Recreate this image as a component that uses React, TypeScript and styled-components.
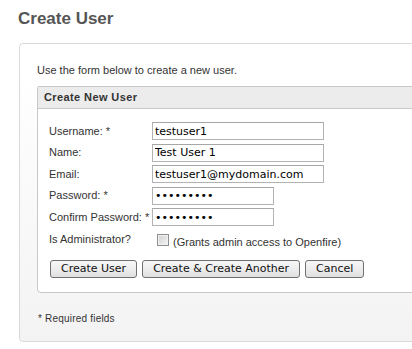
import { Fragment } from 'react';
import styled, { createGlobalStyle } from 'styled-components';

const GlobalStyle = createGlobalStyle`
  html, body {
    margin: 0;
    padding: 0;
    background: #fff;
    overflow: hidden;
  }
  body {
    font-family: "Liberation Sans", Arial, sans-serif;
  }
`;

const Page = styled.div`
  width: 412px;
  height: 349px;
  overflow: hidden;
`;

const Title = styled.h1`
  margin: 9px 0 14px 18px;
  font-size: 17px;
  line-height: 20px;
  font-weight: bold;
  color: #555;
`;

const ContentBox = styled.div`
  margin-left: 19px;
  width: 440px;
  padding: 20px 0 16.5px 17px;
  border: 1px solid #d9d9d9;
  border-radius: 4px;
  background: linear-gradient(to bottom, #fff 0px, #fff 30px, #f3f3f3 100%);
`;

const Intro = styled.p`
  margin: 0 0 9px;
  font-size: 11px;
  line-height: 13px;
  color: #333;
`;

const Panel = styled.div`
  border: 1px solid #c8c8c8;
  border-radius: 2px 2px 4px 4px;
  background: #fff;
`;

const PanelHeader = styled.div`
  padding: 4px 0 4px 6px;
  font-size: 11px;
  line-height: 13px;
  font-weight: bold;
  letter-spacing: 0.4px;
  color: #333;
  background: #ececec;
  border-bottom: 1px solid #c8c8c8;
`;

const PanelBody = styled.div`
  padding: 13px 0 14px 11px;
`;

const FormGrid = styled.div`
  display: grid;
  grid-template-columns: 103px auto;
  row-gap: 3.5px;
  align-items: center;
`;

const Label = styled.label`
  font-size: 11px;
  line-height: 13px;
  color: #333;
  white-space: nowrap;
`;

const TextInput = styled.input<{ $wide?: boolean }>`
  box-sizing: border-box;
  width: ${(p) => (p.$wide ? '172px' : '122px')};
  height: 18px;
  margin: 0;
  padding: 0 2px;
  border: 1px solid #b3b3b3;
  border-top-color: #a6a6a6;
  background: #fff;
  font-family: "DejaVu Sans", Verdana, sans-serif;
  font-size: 11px;
  color: #000;
  outline: none;
`;

const AdminRow = styled.div`
  display: flex;
  align-items: flex-start;
  margin-top: 6.5px;
`;

const AdminLabel = styled(Label)`
  width: 103px;
  flex: none;
`;

const CheckBox = styled.input`
  appearance: none;
  box-sizing: border-box;
  width: 12px;
  height: 12px;
  margin: 1px 0 0 5px;
  border: 1px solid #8e8e8e;
  background: linear-gradient(135deg, #cfcfcf 0%, #e6e6e6 60%, #f7f7f7 100%);
  box-shadow: inset 0 0 0 1px #f2f2f2;
`;

const Hint = styled.span`
  margin: 3px 0 0 4px;
  font-size: 11px;
  line-height: 13px;
  color: #333;
  white-space: nowrap;
`;

const ButtonRow = styled.div`
  display: flex;
  gap: 5px;
  margin: 11.5px 0 0 1px;
`;

const Button = styled.button`
  box-sizing: border-box;
  height: 18px;
  margin: 0;
  padding: 0 10px;
  border: 1px solid #707070;
  border-radius: 3px;
  background: linear-gradient(to bottom, #f7f7f7 0%, #ededed 50%, #dfdfdf 100%);
  font-family: "DejaVu Sans", Verdana, sans-serif;
  font-size: 11px;
  line-height: 16px;
  color: #111;
  white-space: nowrap;
`;

const RequiredNote = styled.p`
  margin: 19.5px 0 0 1px;
  font-size: 10px;
  line-height: 12px;
  letter-spacing: 0.2px;
  color: #333;
`;

const fields = [
  { label: 'Username: *', value: 'testuser1', type: 'text', wide: true },
  { label: 'Name:', value: 'Test User 1', type: 'text', wide: true },
  { label: 'Email:', value: 'testuser1@mydomain.com', type: 'text', wide: true },
  { label: 'Password: *', value: 'testuser1', type: 'password', wide: false },
  { label: 'Confirm Password: *', value: 'testuser1', type: 'password', wide: false },
];

const App = () => {
  return (
    <Page>
      <GlobalStyle />
      <Title>Create User</Title>
      <ContentBox>
        <Intro>Use the form below to create a new user.</Intro>
        <Panel>
          <PanelHeader>Create New User</PanelHeader>
          <PanelBody>
            <FormGrid>
              {fields.map((f) => (
                <Fragment key={f.label}>
                  <Label>{f.label}</Label>
                  <TextInput type={f.type} value={f.value} readOnly $wide={f.wide} />
                </Fragment>
              ))}
            </FormGrid>
            <AdminRow>
              <AdminLabel>Is Administrator?</AdminLabel>
              <CheckBox type="checkbox" readOnly />
              <Hint>(Grants admin access to Openfire)</Hint>
            </AdminRow>
            <ButtonRow>
              <Button>Create User</Button>
              <Button>Create &amp; Create Another</Button>
              <Button>Cancel</Button>
            </ButtonRow>
          </PanelBody>
        </Panel>
        <RequiredNote>* Required fields</RequiredNote>
      </ContentBox>
    </Page>
  );
};

export default App;
